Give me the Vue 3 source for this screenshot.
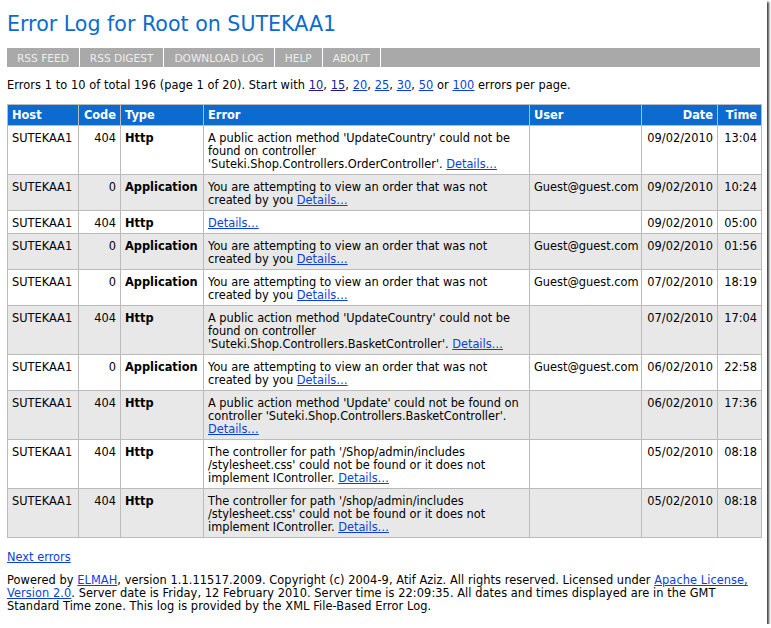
<template>
  <div class="page">
    <h1 class="title">Error Log for Root on SUTEKAA1</h1>
    <ul class="toolbar">
      <li v-for="item in toolbar" :key="item">{{ item }}</li>
    </ul>
    <p class="paging">
      Errors 1 to 10 of total 196 (page 1 of 20). Start with
      <template v-for="(size, index) in sizes" :key="size"
        ><a :class="{ visited: index < 2 }" href="#">{{ size }}</a
        >{{ index < 5 ? ", " : index === 5 ? " or " : "" }}</template
      >
      errors per page.
    </p>
    <table class="errors">
      <colgroup>
        <col v-for="width in colWidths" :key="width.name" :style="{ width: width.px + 'px' }" />
      </colgroup>
      <thead>
        <tr>
          <th>Host</th>
          <th class="right">Code</th>
          <th>Type</th>
          <th>Error</th>
          <th>User</th>
          <th class="right">Date</th>
          <th class="right">Time</th>
        </tr>
      </thead>
      <tbody>
        <tr v-for="(row, index) in rows" :key="index" :class="{ odd: index % 2 === 1 }">
          <td>SUTEKAA1</td>
          <td class="right">{{ row.code }}</td>
          <td class="type">{{ row.type }}</td>
          <td class="message">
            <template v-for="line in row.lines" :key="line">{{ line }}<br /></template>
            <template v-if="row.last">{{ row.last + " " }}</template><a href="#">Details…</a>
          </td>
          <td>{{ row.user }}</td>
          <td class="right">{{ row.date }}</td>
          <td class="right">{{ row.time }}</td>
        </tr>
      </tbody>
    </table>
    <p class="next"><a href="#">Next errors</a></p>
    <p class="footer">
      Powered by <a href="#">ELMAH</a>, version 1.1.11517.2009. Copyright (c) 2004-9, Atif Aziz. All rights reserved. Licensed under
      <a href="#">Apache License,<br />Version 2.0</a>. Server date is Friday, 12 February 2010. Server time is 22:09:35. All dates and times displayed are in the GMT<br />
      Standard Time zone. This log is provided by the XML File-Based Error Log.
    </p>
  </div>
</template>

<script setup>
const toolbar = ["RSS FEED", "RSS DIGEST", "DOWNLOAD LOG", "HELP", "ABOUT"];
const sizes = [10, 15, 20, 25, 30, 50, 100];

const colWidths = [
  { name: "host", px: 71 },
  { name: "code", px: 42 },
  { name: "type", px: 83 },
  { name: "error", px: 326 },
  { name: "user", px: 112 },
  { name: "date", px: 76 },
  { name: "time", px: 44 },
];

const guest = "Guest@guest.com";
const notCreated = {
  code: 0,
  type: "Application",
  lines: ["You are attempting to view an order that was not"],
  last: "created by you",
  user: guest,
};

const rows = [
  {
    code: 404,
    type: "Http",
    lines: ["A public action method 'UpdateCountry' could not be", "found on controller"],
    last: "'Suteki.Shop.Controllers.OrderController'.",
    user: "",
    date: "09/02/2010",
    time: "13:04",
  },
  { ...notCreated, date: "09/02/2010", time: "10:24" },
  { code: 404, type: "Http", lines: [], last: "", user: "", date: "09/02/2010", time: "05:00" },
  { ...notCreated, date: "09/02/2010", time: "01:56" },
  { ...notCreated, date: "07/02/2010", time: "18:19" },
  {
    code: 404,
    type: "Http",
    lines: ["A public action method 'UpdateCountry' could not be", "found on controller"],
    last: "'Suteki.Shop.Controllers.BasketController'.",
    user: "",
    date: "07/02/2010",
    time: "17:04",
  },
  { ...notCreated, date: "06/02/2010", time: "22:58" },
  {
    code: 404,
    type: "Http",
    lines: ["A public action method 'Update' could not be found on", "controller 'Suteki.Shop.Controllers.BasketController'."],
    last: "",
    user: "",
    date: "06/02/2010",
    time: "17:36",
  },
  {
    code: 404,
    type: "Http",
    lines: ["The controller for path '/Shop/admin/includes", "/stylesheet.css' could not be found or it does not"],
    last: "implement IController.",
    user: "",
    date: "05/02/2010",
    time: "08:18",
  },
  {
    code: 404,
    type: "Http",
    lines: ["The controller for path '/shop/admin/includes", "/stylesheet.css' could not be found or it does not"],
    last: "implement IController.",
    user: "",
    date: "05/02/2010",
    time: "08:18",
  },
];
</script>

<style scoped>
.page {
  box-sizing: border-box;
  width: 767px;
  height: 624px;
  padding: 12px 7px 0;
  background: #fff;
  color: #000;
  font-family: "DejaVu Sans", Verdana, sans-serif;
  font-size: 11.4px;
  line-height: 13px;
  overflow: hidden;
  box-shadow: 2px 2px 2px #444;
}
.title {
  margin: 0;
  font-size: 20.6px;
  line-height: 24px;
  font-weight: normal;
  color: #0b6bd0;
}
.toolbar {
  display: flex;
  margin: 12px 0 0;
  padding: 0;
  list-style: none;
  background: #a9a9a9;
  height: 19px;
}
.toolbar li {
  padding: 0 10px;
  line-height: 20px;
  font-size: 10.6px;
  color: #eee;
  border-right: 1px solid #fff;
}
.paging {
  margin: 12px 0 0;
  letter-spacing: 0.06px;
}
a {
  color: #0b3fe0;
}
a.visited {
  color: #1a1a90;
}
.errors {
  table-layout: fixed;
  width: 754px;
  margin-top: 12px;
  border-collapse: collapse;
  border: 1px solid #bbb;
}
.errors th,
.errors td {
  padding: 6px 4px 3px;
  border: 1px solid #bbb;
  text-align: left;
  vertical-align: top;
}
.errors th {
  padding: 4px 4px 3px;
  background: #0b6bd0;
  color: #fff;
  font-weight: bold;
}
.errors .right {
  text-align: right;
}
.errors .type {
  font-weight: bold;
}
.errors .message {
  letter-spacing: -0.02px;
}
.errors .odd td {
  background: #e8e8e8;
}
.next {
  margin: 13px 0 0;
}
.footer {
  margin: 10px 0 0;
  letter-spacing: 0.06px;
}
</style>

<style>
html,
body {
  margin: 0;
  background: #fff;
}
</style>
